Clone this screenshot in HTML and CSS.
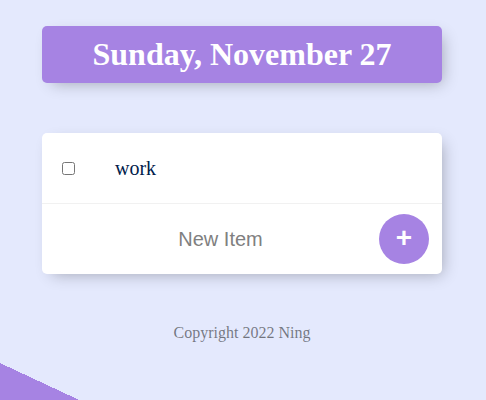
FILE: index.html
```html
<!DOCTYPE html>
<html lang="en">
<head>
<meta charset="utf-8">
<title>To-Do List</title>
<link rel="stylesheet" href="styles.css">
</head>
<body>
  <div class="box heading">
    <h1 class="title">Sunday, November 27</h1>
  </div>
  <div class="box">
    <div class="item">
      <input type="checkbox" class="check" name="checkbox">
      <p class="label">work</p>
    </div>
    <form class="item new-item" onsubmit="return false">
      <input type="text" class="new-input" name="newItem" placeholder="New Item" autocomplete="off">
      <button type="submit" class="add" name="list">+</button>
    </form>
  </div>
  <footer class="footer">Copyright 2022 Ning</footer>
</body>
</html>
```

FILE: styles.css
```css
html {
  height: 100%;
  background-color: #E4E9FD;
  background-image: linear-gradient(25deg, #A683E3 33.5px, #E4E9FD 33.5px);
  font-family: "Liberation Serif", "Times New Roman", serif;
}

body {
  margin: 0 9px 8px 7px;
  padding-top: 0;
}

.box {
  max-width: 400px;
  margin: 50px auto;
  background: #ffffff;
  border-radius: 5px;
  box-shadow: 5px 5px 15px -5px rgba(0, 0, 0, 0.3);
}

.heading {
  margin-top: 26px;
  background-color: #A683E3;
  text-align: center;
}

.title {
  margin: 0;
  padding: 10px;
  color: #ffffff;
  font-size: 32px;
  font-weight: bold;
}

.item {
  min-height: 70px;
  display: flex;
  align-items: center;
  border-bottom: 1px solid #F1F1F1;
}

.item:last-child {
  border-bottom: 0;
}

.check {
  margin: 20px;
}

.label {
  margin: 0;
  padding: 20px;
  font-family: "Liberation Serif", "Times New Roman", serif;
  font-size: 20px;
  font-weight: normal;
  color: #00204a;
}

.new-item {
  text-align: center;
  margin: 0 0 0 20px;
}

.new-input {
  text-align: center;
  height: 60px;
  border: none;
  background: transparent;
  font-family: "Liberation Sans", Arial, sans-serif;
  font-size: 20px;
  font-weight: normal;
  width: 313px;
  padding: 1px 2px;
}

.new-input:focus {
  outline: none;
  box-shadow: inset 0 -3px 0 0 #A683E3;
}

.new-input::placeholder {
  color: grey;
  opacity: 1;
}

.add {
  min-height: 50px;
  width: 50px;
  border-radius: 50%;
  border: 0;
  background-color: #A683E3;
  color: #ffffff;
  font-family: "Liberation Sans", Arial, sans-serif;
  font-size: 28px;
  font-weight: bold;
  line-height: 1;
  padding: 0 0 2px;
}

.footer {
  color: rgba(0, 0, 0, 0.5);
  text-align: center;
}
```
